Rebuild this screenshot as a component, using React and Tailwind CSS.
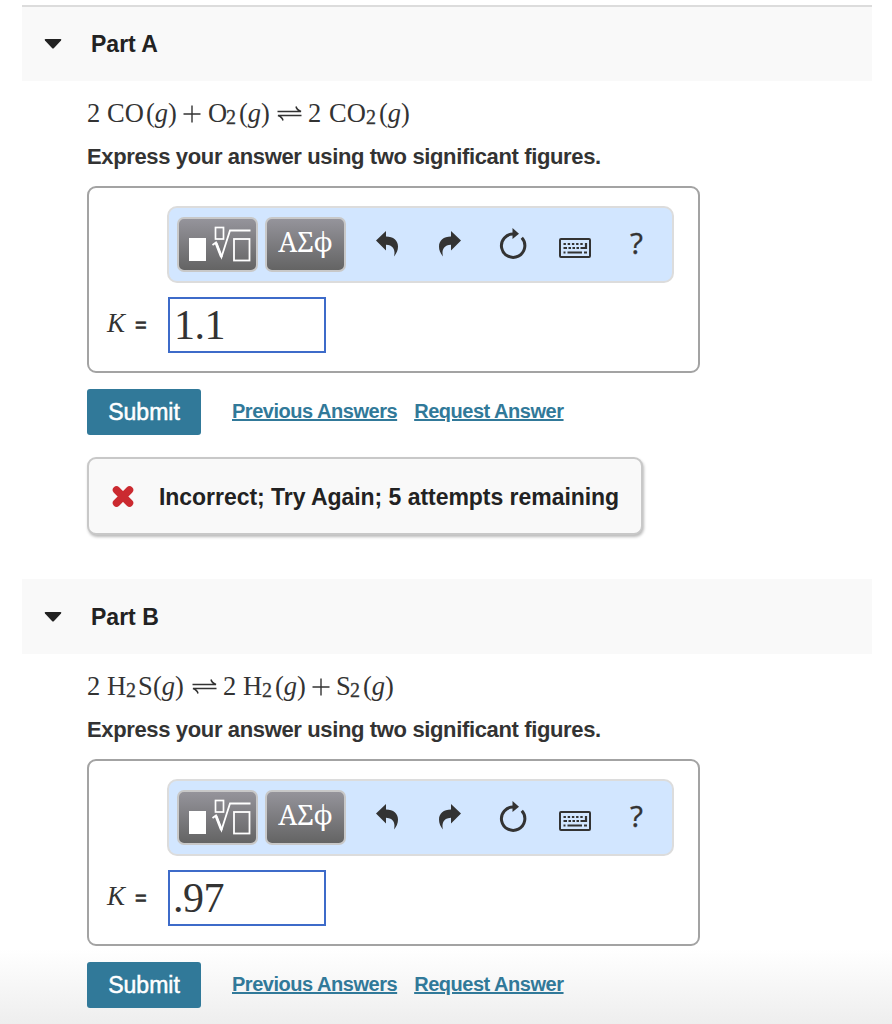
import clsx from 'clsx'

// Each formula is a list of tokens, every token sits in a slot of its own width
const PARTS = [
  {
    id: 'A',
    label: 'Part A',
    value: '1.1',
    feedback: 'Incorrect; Try Again; 5 attempts remaining',
    formula: [
      { text: '2', slot: 'w-[20px]' },
      { text: 'CO', slot: 'w-[39px]' },
      { text: 'g', type: 'state', slot: 'w-[37px]' },
      { type: 'plus', slot: 'w-[25px]' },
      { text: 'O', slot: 'w-[18px]' },
      { text: '2', type: 'sub', slot: 'w-[13px]' },
      { text: 'g', type: 'state', slot: 'w-[38px]' },
      { type: 'arrows', slot: 'w-[31px]' },
      { text: '2', slot: 'w-[21px]' },
      { text: 'CO', slot: 'w-[37px]' },
      { text: '2', type: 'sub', slot: 'w-[13px]' },
      { text: 'g', type: 'state', slot: 'w-[32px]' },
    ],
  },
  {
    id: 'B',
    label: 'Part B',
    value: '.97',
    formula: [
      { text: '2', slot: 'w-[20px]' },
      { text: 'H', slot: 'w-[19px]' },
      { text: '2', type: 'sub', slot: 'w-[12px]' },
      { text: 'S', slot: 'w-[15px]' },
      { text: 'g', type: 'state', slot: 'w-[39px]' },
      { type: 'arrows', slot: 'w-[31px]' },
      { text: '2', slot: 'w-[20px]' },
      { text: 'H', slot: 'w-[19px]' },
      { text: '2', type: 'sub', slot: 'w-[13px]' },
      { text: 'g', type: 'state', slot: 'w-[37px]' },
      { type: 'plus', slot: 'w-[24px]' },
      { text: 'S', slot: 'w-[14px]' },
      { text: '2', type: 'sub', slot: 'w-[13px]' },
      { text: 'g', type: 'state', slot: 'w-[32px]' },
    ],
  },
]

function PlusSign() {
  return (
    <svg width="18" height="20" viewBox="0 0 18 20" stroke="#333" strokeWidth="1.4">
      <path d="M0.5 11H17.5M9 2.500V19.500" />
    </svg>
  )
}

function EquilibriumArrows() {
  return (
    <svg width="25" height="20" viewBox="0 0 25 20" fill="none" stroke="#333" strokeWidth="1.500">
      <path d="M0.5 8.500H24C21.500 7.500 19.500 6 19 3.500" />
      <path d="M24.500 12.500H1C3.500 13.500 5.500 15 6 17.500" />
    </svg>
  )
}

function Token({ token }) {
  if (token.type === 'plus') return <PlusSign />
  if (token.type === 'arrows') return <EquilibriumArrows />
  if (token.type === 'sub') {
    return <span className="relative top-[3px] text-[20px] [-webkit-text-stroke:0.3px_#333]">{token.text}</span>
  }
  if (token.type === 'state') {
    return (
      <>
        ({<i>{token.text}</i>})
      </>
    )
  }
  return token.text
}

function Formula({ tokens }) {
  return (
    <div className="flex h-8 items-center whitespace-nowrap font-['Liberation_Serif',serif] text-[26.500px] leading-8 text-[#333]">
      {tokens.map((token, i) => (
        <span key={i} className={clsx('shrink-0', token.slot)}>
          <Token token={token} />
        </span>
      ))}
    </div>
  )
}

function TemplateIcon() {
  return (
    <svg width="62" height="36" viewBox="0 0 62 36" fill="none" stroke="#fff" className="translate-x-0.5 -translate-y-px">
      <rect x="0" y="12" width="17" height="23" fill="#fff" stroke="none" />
      <rect x="26.500" y="1.500" width="8" height="11.500" strokeWidth="1.700" />
      <path d="M23.500 19L27 16.500L32.500 31L41 4.500H61.500" strokeWidth="1.800" />
      <path d="M27 17L32.500 31" strokeWidth="2.800" />
      <rect x="45" y="13" width="15.500" height="21.500" strokeWidth="1.800" />
    </svg>
  )
}

function UndoIcon({ flipped }) {
  return (
    <svg
      width="22"
      height="26"
      viewBox="0 0 22 26"
      fill="#333"
      className={clsx(flipped && '-scale-x-100')}
    >
      <path d="M0 9.500L10 0V5.500C17.500 5.500 22 9.500 22 15.500C22 19.500 20.500 22.500 18 25.500C19.200 21 18.800 14 10 13.700V19.500Z" />
    </svg>
  )
}

function ResetIcon() {
  return (
    <svg width="28" height="31" viewBox="0 0 28 31" fill="none">
      <path d="M15 6A11.700 11.700 0 1 0 22.800 9.800" stroke="#333" strokeWidth="3" />
      <path d="M13.500 0L20 5.700L13.500 11Z" fill="#333" />
    </svg>
  )
}

function KeyboardIcon() {
  return (
    <svg width="32" height="20" viewBox="0 0 32 20" fill="none" stroke="#333">
      <rect x="1" y="1" width="30" height="18" rx="1" strokeWidth="2" />
      <path d="M4.500 6H25" strokeWidth="2.200" strokeDasharray="2.400 1.800" />
      <path d="M4.500 10H8M9.500 10H12M13.500 10H16M17.500 10H20M21.500 10H28M27 5V11" strokeWidth="2.200" />
      <path d="M4.500 14.500H6.500M8.500 14.500H23M25 14.500H28" strokeWidth="2.200" />
    </svg>
  )
}

function ToolButton({ className, children }) {
  return (
    <button
      className={clsx(
        'flex h-[55px] w-[81px] shrink-0 items-center justify-center rounded-[7px] border-2 border-[#c8c8c8] bg-linear-to-b from-[#95949b] to-[#646464] text-white',
        className
      )}
    >
      {children}
    </button>
  )
}

function Toolbar() {
  return (
    <div className="ml-[78px] flex h-[77px] w-[507px] items-center rounded-[10px] border-2 border-[#dcdcdc] bg-[#d2e6ff] pl-2">
      <ToolButton>
        <TemplateIcon />
      </ToolButton>
      <ToolButton className="ml-[7px] pb-1 font-['Noto_Serif','Liberation_Serif',serif] text-[27px]">ΑΣϕ</ToolButton>
      <div className="ml-[30px] flex items-center">
        <span className="w-[63px] -translate-y-px">
          <UndoIcon />
        </span>
        <span className="w-[60px] -translate-y-px">
          <UndoIcon flipped />
        </span>
        <span className="w-[60px] -translate-y-px">
          <ResetIcon />
        </span>
        <span className="w-[71px] pt-1.5">
          <KeyboardIcon />
        </span>
        <span className="-translate-y-0.5 font-['Open_Sans',sans-serif] text-[30px] leading-none text-[#333] [-webkit-text-stroke:0.4px_#333]">
          ?
        </span>
      </div>
    </div>
  )
}

function Feedback({ message }) {
  return (
    <div className="mt-[22px] flex h-[78px] w-[556px] items-center rounded-[9px] border-2 border-[#c8c8c8] bg-[#f9f9f9] pl-[22px] shadow-[1px_2px_3px_#bbb]">
      <svg width="24" height="23" viewBox="0 0 24 23" fill="none" stroke="#cb2a30" strokeLinecap="round">
        <path d="M5.500 5L18.500 18M18.500 5L5.500 18" strokeWidth="7.500" />
      </svg>
      <span className="ml-6 pt-[3px] whitespace-nowrap text-[23px] tracking-[-0.04px] font-bold text-[#222]">{message}</span>
    </div>
  )
}

function Part({ part, first }) {
  return (
    <section className={clsx(first ? 'h-[574px]' : 'h-[445px]')}>
      <header
        className={clsx(
          'mr-5 ml-[22px] flex items-center bg-[#f9f9f9] pl-[22px]',
          first ? 'h-[76px] border-t-2 border-[#dcdcdc]' : 'h-[75px]'
        )}
      >
        <svg width="18" height="10" viewBox="0 0 17 10" fill="#222">
          <path d="M1 0H16Q17.500 0 16.500 1.500L9.500 9Q8.500 10 7.500 9L0.500 1.500Q-0.500 0 1 0Z" />
        </svg>
        <h2 className="ml-[29px] pt-px text-[23px] font-bold text-[#222]">{part.label}</h2>
      </header>

      <div className="pt-4 pl-[87px]">
        <Formula tokens={part.formula} />
        <p className="mt-[13px] h-7 whitespace-nowrap text-[22px] leading-[30px] font-bold tracking-[-0.36px] text-[#333]">
          Express your answer using two significant figures.
        </p>

        {/* Answer entry */}
        <div className="mt-4 h-[187px] w-[613px] rounded-[9px] border-2 border-[#a3a3a3] bg-white pt-[18px]">
          <Toolbar />
          <div className="mt-3.5 flex items-center">
            <div className="flex w-[79px] items-baseline pb-1 pl-[18px] text-[#333]">
              <i className="w-7 font-['Liberation_Serif',serif] text-[27px]">K</i>
              <span className="text-[20px] [-webkit-text-stroke:0.6px_#333]">=</span>
            </div>
            <div
              className={clsx(
                "h-14 w-[158px] border-2 border-[#3d6bc9] bg-white font-['Liberation_Serif',serif] text-[42px] leading-[52px] tracking-[-0.5px] text-[#333]",
                part.value.startsWith('.') ? 'pl-[3px]' : 'pl-1'
              )}
            >
              {part.value}
            </div>
          </div>
        </div>

        {/* Actions */}
        <div className="mt-4 flex h-[46px] items-center">
          <button className="h-[46px] w-[114px] rounded-[3px] bg-[#317999] text-[23px] text-white [-webkit-text-stroke:0.5px_white]">
            Submit
          </button>
          <div className="ml-[31px] flex gap-[17px] pb-[3px] whitespace-nowrap text-[20px] font-bold tracking-[-0.47px] text-[#317999]">
            <a className="underline">Previous Answers</a>
            <a className="underline">Request Answer</a>
          </div>
        </div>

        {part.feedback && <Feedback message={part.feedback} />}
      </div>
    </section>
  )
}

export default function App() {
  return (
    <div className="h-[1024px] overflow-hidden bg-[linear-gradient(to_top,#eeeeee,#ffffff_75px)] pt-[5px] font-['Liberation_Sans',sans-serif]">
      {PARTS.map((part, i) => (
        <Part key={part.id} part={part} first={i === 0} />
      ))}
    </div>
  )
}
